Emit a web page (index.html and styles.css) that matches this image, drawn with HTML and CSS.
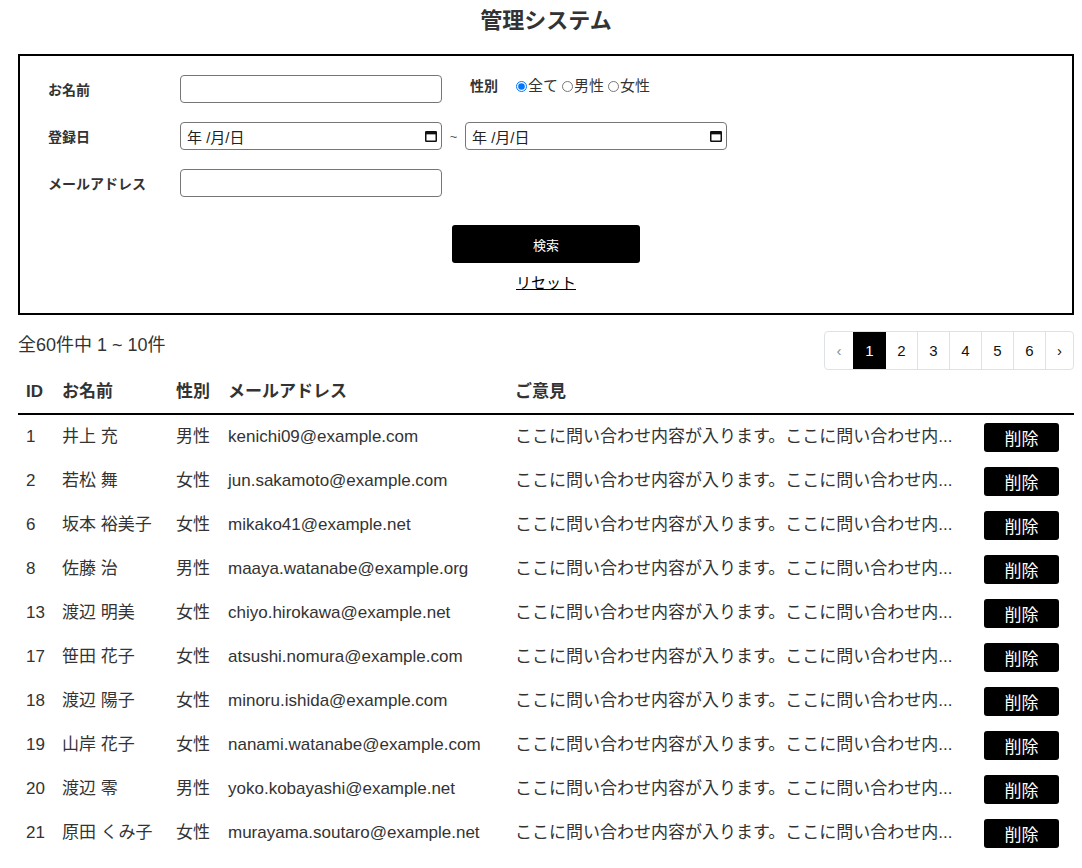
FILE: index.html
```html
<!DOCTYPE html>
<html lang="ja">
<head>
<meta charset="utf-8">
<title>管理システム</title>
<link rel="stylesheet" href="styles.css">
</head>
<body>
<div class="page">
  <h1 class="title">管理システム</h1>

  <form class="search">
    <div class="row">
      <label class="label">お名前</label>
      <input class="field" type="text">
      <span class="label label-inline">性別</span>
      <div class="radios">
        <label class="radio"><input type="radio" name="gender" checked>全て</label>
        <label class="radio"><input type="radio" name="gender">男性</label>
        <label class="radio"><input type="radio" name="gender">女性</label>
      </div>
    </div>
    <div class="row">
      <label class="label">登録日</label>
      <div class="field date"><span class="date-text">年 /月/日</span><svg class="cal" viewBox="0 0 12 12" width="12" height="12"><rect x="0.75" y="1.75" width="10.5" height="9.5" fill="none" stroke="#111" stroke-width="1.5" rx="0.5"/><rect x="0.75" y="1.75" width="10.5" height="2.6" fill="#111"/></svg></div>
      <span class="tilde">~</span>
      <div class="field date"><span class="date-text">年 /月/日</span><svg class="cal" viewBox="0 0 12 12" width="12" height="12"><rect x="0.75" y="1.75" width="10.5" height="9.5" fill="none" stroke="#111" stroke-width="1.5" rx="0.5"/><rect x="0.75" y="1.75" width="10.5" height="2.6" fill="#111"/></svg></div>
    </div>
    <div class="row">
      <label class="label">メールアドレス</label>
      <input class="field" type="text">
    </div>
    <div class="actions">
      <button class="btn-search" type="button">検索</button>
      <a class="reset" href="#">リセット</a>
    </div>
  </form>

  <div class="toolbar">
    <p class="count">全60件中 1 ~ 10件</p>
    <nav class="pager">
      <span class="pg arrow disabled">‹</span>
      <span class="pg num active">1</span>
      <span class="pg num">2</span>
      <span class="pg num">3</span>
      <span class="pg num">4</span>
      <span class="pg num">5</span>
      <span class="pg num">6</span>
      <span class="pg arrow">›</span>
    </nav>
  </div>

  <table class="list">
    <colgroup>
      <col class="c-id"><col class="c-name"><col class="c-gender"><col class="c-mail"><col class="c-body"><col class="c-op">
    </colgroup>
    <thead>
      <tr><th>ID</th><th>お名前</th><th>性別</th><th>メールアドレス</th><th>ご意見</th><th></th></tr>
    </thead>
    <tbody>
      <tr><td>1</td><td>井上 充</td><td>男性</td><td>kenichi09@example.com</td><td class="body">ここに問い合わせ内容が入ります。ここに問い合わせ内...</td><td><button class="btn-del" type="button">削除</button></td></tr>
      <tr><td>2</td><td>若松 舞</td><td>女性</td><td>jun.sakamoto@example.com</td><td class="body">ここに問い合わせ内容が入ります。ここに問い合わせ内...</td><td><button class="btn-del" type="button">削除</button></td></tr>
      <tr><td>6</td><td>坂本 裕美子</td><td>女性</td><td>mikako41@example.net</td><td class="body">ここに問い合わせ内容が入ります。ここに問い合わせ内...</td><td><button class="btn-del" type="button">削除</button></td></tr>
      <tr><td>8</td><td>佐藤 治</td><td>男性</td><td>maaya.watanabe@example.org</td><td class="body">ここに問い合わせ内容が入ります。ここに問い合わせ内...</td><td><button class="btn-del" type="button">削除</button></td></tr>
      <tr><td>13</td><td>渡辺 明美</td><td>女性</td><td>chiyo.hirokawa@example.net</td><td class="body">ここに問い合わせ内容が入ります。ここに問い合わせ内...</td><td><button class="btn-del" type="button">削除</button></td></tr>
      <tr><td>17</td><td>笹田 花子</td><td>女性</td><td>atsushi.nomura@example.com</td><td class="body">ここに問い合わせ内容が入ります。ここに問い合わせ内...</td><td><button class="btn-del" type="button">削除</button></td></tr>
      <tr><td>18</td><td>渡辺 陽子</td><td>女性</td><td>minoru.ishida@example.com</td><td class="body">ここに問い合わせ内容が入ります。ここに問い合わせ内...</td><td><button class="btn-del" type="button">削除</button></td></tr>
      <tr><td>19</td><td>山岸 花子</td><td>女性</td><td>nanami.watanabe@example.com</td><td class="body">ここに問い合わせ内容が入ります。ここに問い合わせ内...</td><td><button class="btn-del" type="button">削除</button></td></tr>
      <tr><td>20</td><td>渡辺 零</td><td>男性</td><td>yoko.kobayashi@example.net</td><td class="body">ここに問い合わせ内容が入ります。ここに問い合わせ内...</td><td><button class="btn-del" type="button">削除</button></td></tr>
      <tr><td>21</td><td>原田 くみ子</td><td>女性</td><td>murayama.soutaro@example.net</td><td class="body">ここに問い合わせ内容が入ります。ここに問い合わせ内...</td><td><button class="btn-del" type="button">削除</button></td></tr>
    </tbody>
  </table>
</div>
</body>
</html>
```
FILE: styles.css
```css
* { box-sizing: border-box; }

body {
  margin: 0;
  font-family: "Liberation Sans", "Noto Sans CJK JP", sans-serif;
  color: #333;
  background: #fff;
}

.page {
  padding: 0 8px 20px 18px;
}

.title {
  margin: 0 0 12px;
  font-size: 22px;
  line-height: 42px;
  font-weight: bold;
  text-align: center;
  color: #333;
}

.search {
  border: 2px solid #000;
  padding: 19px 28px 20px;
}

.row {
  display: flex;
  align-items: center;
  height: 28px;
  margin-bottom: 19px;
}

.label {
  width: 132px;
  flex: none;
  font-size: 14px;
  font-weight: bold;
  color: #333;
}

.label-inline {
  width: auto;
  margin: 0 18px 0 28px;
  align-self: flex-start;
  line-height: 22px;
}

.field {
  width: 262px;
  height: 28px;
  flex: none;
  border: 1px solid #767676;
  border-radius: 4px;
  background: #fff;
  font-family: inherit;
  font-size: 15px;
  padding: 0 6px;
}

.date {
  display: flex;
  align-items: center;
  justify-content: space-between;
  padding: 0 4px 0 6px;
  color: #222;
}

.date-text {
  font-size: 15px;
}

.cal {
  display: block;
}

.tilde {
  width: 23px;
  text-align: center;
  font-size: 13px;
  color: #555;
}

.radios {
  display: flex;
  align-self: flex-start;
  gap: 4px;
  font-size: 15px;
  line-height: 22px;
  color: #333;
}

.radio {
  display: flex;
  align-items: center;
}

.radio input {
  width: 11px;
  height: 11px;
  margin: 0 1px 0 0;
}

.actions {
  display: flex;
  flex-direction: column;
  align-items: center;
  padding-top: 9px;
}

.btn-search {
  width: 188px;
  height: 38px;
  border: none;
  border-radius: 3px;
  background: #000;
  color: #fff;
  font-family: inherit;
  font-size: 13px;
}

.reset {
  margin-top: 10px;
  font-size: 15px;
  line-height: 20px;
  color: #000;
  text-decoration: underline;
}

.toolbar {
  display: flex;
  justify-content: space-between;
  align-items: flex-start;
  margin-top: 16px;
}

.count {
  margin: 0;
  font-size: 18px;
  line-height: 28px;
  color: #333;
}

.pager {
  display: flex;
  height: 39px;
  border: 1px solid #dee2e6;
  border-radius: 4px;
  overflow: hidden;
}

.pg {
  display: flex;
  align-items: center;
  justify-content: center;
  font-size: 15px;
  color: #111;
  border-left: 1px solid #dee2e6;
}

.pg:first-child { border-left: none; }

.num { width: 32px; }
.arrow { width: 28px; }

.disabled { color: #8a8a8a; }

.active {
  background: #000;
  color: #fff;
  border-left-color: #000;
}

.active + .pg { border-left-color: #000; }

.list {
  width: 100%;
  margin-top: 1px;
  border-collapse: collapse;
  table-layout: fixed;
  font-size: 17px;
  color: #333;
}

.c-id { width: 36px; }
.c-name { width: 114px; }
.c-gender { width: 52px; }
.c-mail { width: 287px; }
.c-op { width: 98px; }

.list th {
  text-align: left;
  font-weight: bold;
  padding: 9px 8px;
  line-height: 24px;
  border-bottom: 2px solid #000;
  white-space: nowrap;
}

.list td {
  padding: 7px 8px;
  line-height: 30px;
  height: 44px;
  white-space: nowrap;
  overflow: hidden;
}

.btn-del {
  display: block;
  width: 75px;
  height: 29px;
  border: none;
  border-radius: 3px;
  background: #000;
  color: #fff;
  font-family: inherit;
  font-size: 17px;
  padding: 0;
}
```
